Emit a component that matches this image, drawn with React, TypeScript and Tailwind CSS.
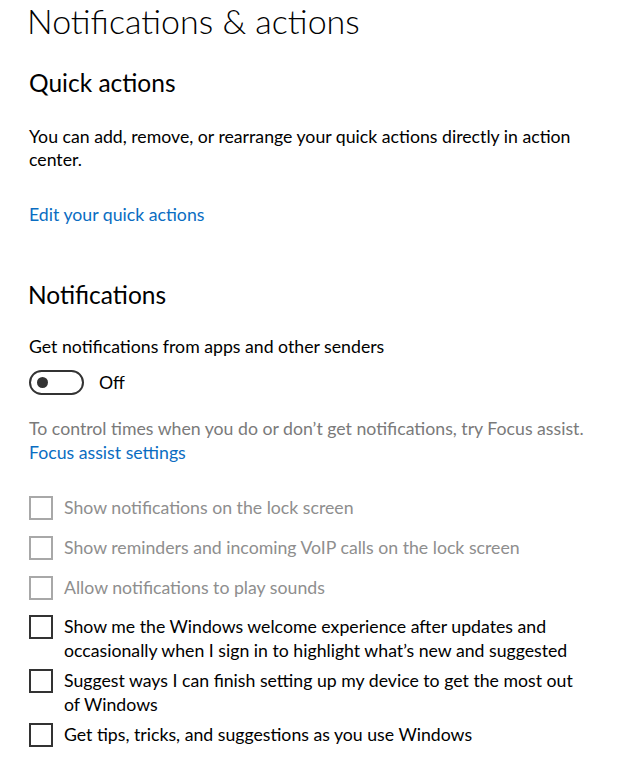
import React from "react";

const font = { fontFamily: 'Lato, "Open Sans", "Noto Sans", sans-serif' };

function Box({ disabled }: { disabled?: boolean }) {
  return (
    <div
      className={
        "w-[24px] h-[24px] shrink-0 border-2 bg-white " +
        (disabled ? "border-[#a8a8a8]" : "border-[#333333]")
      }
    />
  );
}

function CheckRow({ lines, disabled }: { lines: string[]; disabled?: boolean }) {
  return (
    <div className="flex items-start">
      <Box disabled={disabled} />
      <div
        className={
          "ml-[11px] text-[17.7px] leading-[24px] " +
          (disabled ? "text-[#8e8e8e]" : "text-black")
        }
      >
        {lines.map((l, i) => (
          <div key={i} className="whitespace-nowrap">
            {l}
          </div>
        ))}
      </div>
    </div>
  );
}

export default function App() {
  return (
    <div className="w-[635px] h-[783px] bg-white overflow-hidden pl-[29px]" style={font}>
      <div className="text-[34px] font-light leading-[40px] text-black mt-[1px] -ml-[2px]">
        Notifications &amp; actions
      </div>
      <div className="text-[24.5px] leading-[30px] text-black mt-[27px]">Quick actions</div>
      <div className="text-[17.7px] leading-[23px] text-black mt-[27px]">
        <div className="whitespace-nowrap">
          You can add, remove, or rearrange your quick actions directly in action
        </div>
        <div>center.</div>
      </div>
      <div className="text-[17.7px] leading-[23px] text-[#0a6dc2] mt-[32px]">
        Edit your quick actions
      </div>
      <div className="text-[24.5px] leading-[30px] text-black mt-[54px] -ml-[1px]">Notifications</div>
      <div className="text-[17.7px] leading-[23px] text-black mt-[25px]">
        Get notifications from apps and other senders
      </div>
      <div className="flex items-center mt-[12px]">
        <div className="w-[55px] h-[25px] rounded-full border-[2.5px] border-[#333333] flex items-center pl-[6px]">
          <div className="w-[11px] h-[11px] rounded-full bg-[#333333]" />
        </div>
        <div className="ml-[15px] text-[17.7px] leading-[23px] text-black">Off</div>
      </div>
      <div className="text-[17.7px] leading-[24px] text-[#7a7a7a] mt-[22px] whitespace-nowrap">
        To control times when you do or don’t get notifications, try Focus assist.
      </div>
      <div className="text-[17.7px] leading-[24px] text-[#0a6dc2]">Focus assist settings</div>
      <div className="flex flex-col gap-[16px] mt-[31px]">
        <CheckRow disabled lines={["Show notifications on the lock screen"]} />
        <CheckRow disabled lines={["Show reminders and incoming VoIP calls on the lock screen"]} />
        <CheckRow disabled lines={["Allow notifications to play sounds"]} />
      </div>
      <div className="flex flex-col gap-[6px] mt-[15px]">
        <CheckRow
          lines={[
            "Show me the Windows welcome experience after updates and",
            "occasionally when I sign in to highlight what’s new and suggested",
          ]}
        />
        <CheckRow
          lines={[
            "Suggest ways I can finish setting up my device to get the most out",
            "of Windows",
          ]}
        />
        <CheckRow lines={["Get tips, tricks, and suggestions as you use Windows"]} />
      </div>
    </div>
  );
}
